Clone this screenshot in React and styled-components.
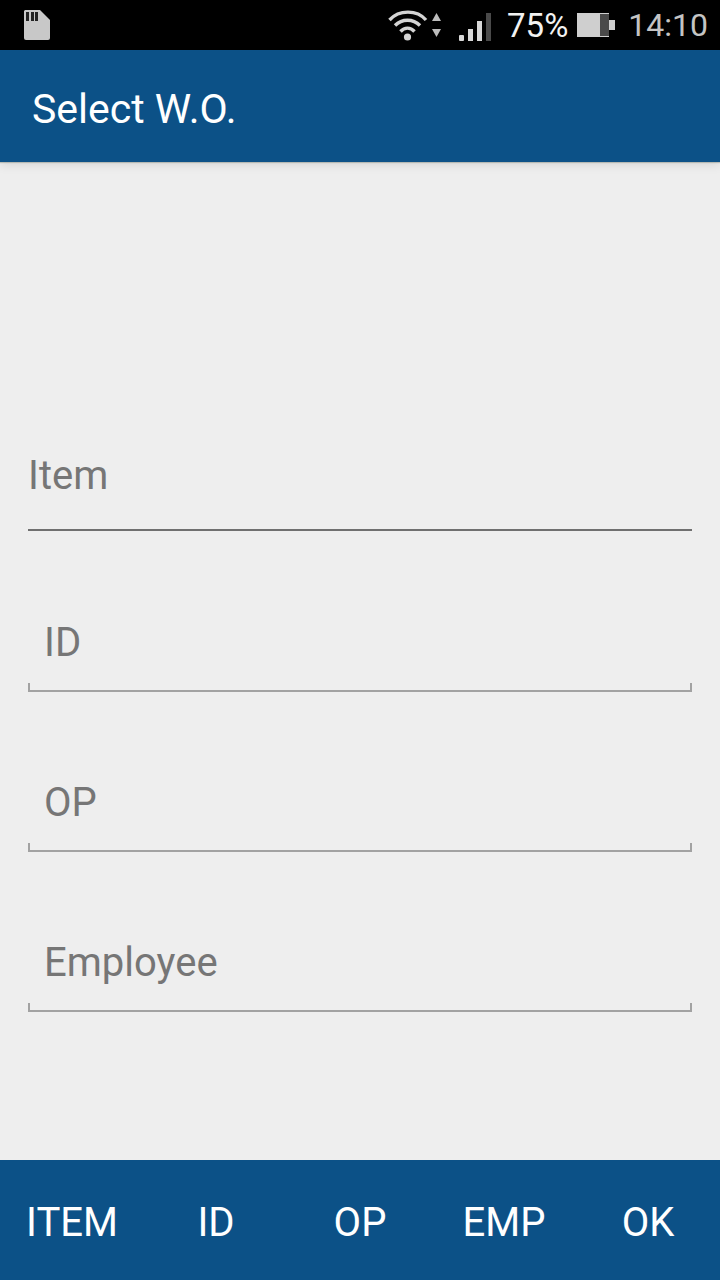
import React from 'react';
import styled, { createGlobalStyle } from 'styled-components';

const Global = createGlobalStyle`
  html, body { margin: 0; padding: 0; }
  body { font-family: Roboto, "Liberation Sans", sans-serif; background: #eeeeee; }
`;

const Screen = styled.div`
  width: 720px;
  height: 1280px;
  display: flex;
  flex-direction: column;
  overflow: hidden;
  background: #eeeeee;
`;

const StatusBar = styled.div`
  height: 50px;
  flex: none;
  background: #000;
  display: flex;
  align-items: center;
  padding: 0 12px 0 23px;
  color: #cfcfcf;
`;

const StatusIcons = styled.div`
  margin-left: auto;
  display: flex;
  align-items: center;
`;

const WifiIcon = styled.svg`
  display: block;
  margin-right: 18px;
`;

const SignalIcon = styled.svg`
  display: block;
  margin-top: 4px;
`;

const Percent = styled.span`
  font-size: 33px;
  color: #f2f2f2;
  margin: 0 9px 0 16px;
`;

const Clock = styled.span`
  font-size: 32px;
  color: #c4c4c4;
  margin-left: 13px;
`;

const AppBar = styled.header`
  height: 112px;
  flex: none;
  box-sizing: border-box;
  background: #0c5187;
  display: flex;
  align-items: center;
  padding: 5px 0 0 32px;
  color: #fff;
  font-size: 41px;
  box-shadow: 0 1px 1px rgba(90, 100, 80, 0.3), 0 3px 10px rgba(0, 0, 0, 0.1);
  position: relative;
  z-index: 1;
`;

const Form = styled.main`
  flex: 1;
  padding: 272px 28px 0;
  display: flex;
  flex-direction: column;
`;

const PlainField = styled.div`
  height: 97px;
  box-sizing: border-box;
  border-bottom: 2px solid #6f6f6f;
  margin-bottom: 66px;
  font-size: 40px;
  line-height: 83px;
  color: #767676;
`;

const Field = styled.div`
  height: 95px;
  box-sizing: border-box;
  margin-bottom: 65px;
  padding-left: 16px;
  font-size: 40px;
  line-height: 92px;
  color: #767676;
  border-bottom: 2px solid #a2a2a2;
  position: relative;

  &::before,
  &::after {
    content: '';
    position: absolute;
    bottom: 0;
    width: 2px;
    height: 7px;
    background: #a2a2a2;
  }
  &::before { left: 0; }
  &::after { right: 0; }
`;

const BottomBar = styled.nav`
  height: 120px;
  flex: none;
  background: #0c5187;
  display: grid;
  grid-template-columns: repeat(5, 144px);
`;

const BarButton = styled.button`
  border: 0;
  background: none;
  padding: 5px 0 0;
  color: #fff;
  font-family: inherit;
  font-size: 40px;
  text-align: center;
`;

const SdCard = () => (
  <svg width="27" height="30" viewBox="0 0 27 30">
    <path d="M2 0H17L27 10V28a2 2 0 0 1-2 2H3a2 2 0 0 1-2-2V1z" fill="#c8c8c8" />
    <rect x="3" y="2" width="3" height="9" fill="#222" />
    <rect x="8" y="2" width="3" height="9" fill="#222" />
    <rect x="12" y="2" width="3" height="9" fill="#222" />
  </svg>
);

const Wifi = () => (
  <WifiIcon width="53" height="32" viewBox="0 0 53 32">
    <g fill="none" stroke="#d4d4d4" strokeWidth="3.4">
      <path d="M1.5 11C11 0.5 29 0.5 38 11" />
      <path d="M7 16.5C14 9.5 25 9.5 32 16.5" />
      <path d="M12.5 22.5C16.5 18 22.5 18 26.5 22.5" />
    </g>
    <circle cx="19.5" cy="28" r="3.6" fill="#d4d4d4" />
    <path d="M48.5 4L53 12H44z" fill="#bdbdbd" />
    <path d="M48.5 28L44 20H53z" fill="#bdbdbd" />
  </WifiIcon>
);

const Signal = () => (
  <SignalIcon width="32" height="28" viewBox="0 0 32 28">
    <rect x="0" y="22" width="5" height="6" rx="1" fill="#d8d8d8" />
    <rect x="9" y="16" width="5" height="12" fill="#d8d8d8" />
    <rect x="18" y="8" width="5" height="20" fill="#d8d8d8" />
    <rect x="27" y="0" width="5" height="28" fill="#4a4a4a" />
  </SignalIcon>
);

const Battery = () => (
  <svg width="38" height="24" viewBox="0 0 38 24">
    <rect x="0" y="0" width="32" height="24" fill="#cfcfcf" />
    <rect x="23" y="1" width="9" height="22" fill="#4a4a4a" />
    <rect x="32" y="7" width="6" height="10" fill="#cfcfcf" />
  </svg>
);

export default function App() {
  return (
    <Screen>
      <Global />
      <StatusBar>
        <SdCard />
        <StatusIcons>
          <Wifi />
          <Signal />
          <Percent>75%</Percent>
          <Battery />
          <Clock>14:10</Clock>
        </StatusIcons>
      </StatusBar>
      <AppBar>Select W.O.</AppBar>
      <Form>
        <PlainField>Item</PlainField>
        <Field>ID</Field>
        <Field>OP</Field>
        <Field>Employee</Field>
      </Form>
      <BottomBar>
        <BarButton>ITEM</BarButton>
        <BarButton>ID</BarButton>
        <BarButton>OP</BarButton>
        <BarButton>EMP</BarButton>
        <BarButton>OK</BarButton>
      </BottomBar>
    </Screen>
  );
}
